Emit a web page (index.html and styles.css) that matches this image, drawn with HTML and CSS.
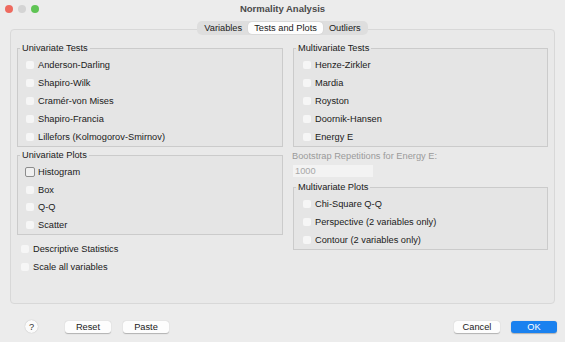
FILE: index.html
```html
<!DOCTYPE html>
<html lang="en">
<head>
  <meta charset="UTF-8">
  <title>Normality Analysis</title>
  <link rel="stylesheet" href="styles.css">
</head>
<body>

<div class="titlebar">
  <div class="lights">
    <span class="light red"></span>
    <span class="light grey"></span>
    <span class="light green"></span>
  </div>
  <div class="title">Normality Analysis</div>
  <div></div>
</div>

<div class="tabs">
  <button class="tab">Variables</button>
  <button class="tab active">Tests and Plots</button>
  <button class="tab">Outliers</button>
</div>

<!-- Tests and Plots tab -->
<div class="panel">
  <div class="column">
    <fieldset class="group">
      <legend>Univariate Tests</legend>
      <label class="row"><input type="checkbox"> Anderson-Darling</label>
      <label class="row"><input type="checkbox"> Shapiro-Wilk</label>
      <label class="row"><input type="checkbox"> Cramér-von Mises</label>
      <label class="row"><input type="checkbox"> Shapiro-Francia</label>
      <label class="row"><input type="checkbox"> Lillefors (Kolmogorov-Smirnov)</label>
    </fieldset>

    <fieldset class="group gap-top">
      <legend>Univariate Plots</legend>
      <label class="row"><input type="checkbox" class="focused"> Histogram</label>
      <label class="row"><input type="checkbox"> Box</label>
      <label class="row"><input type="checkbox"> Q-Q</label>
      <label class="row"><input type="checkbox"> Scatter</label>
    </fieldset>

    <div class="options">
      <label class="row"><input type="checkbox"> Descriptive Statistics</label>
      <label class="row"><input type="checkbox"> Scale all variables</label>
    </div>
  </div>

  <div class="column">
    <fieldset class="group">
      <legend>Multivariate Tests</legend>
      <label class="row"><input type="checkbox"> Henze-Zirkler</label>
      <label class="row"><input type="checkbox"> Mardia</label>
      <label class="row"><input type="checkbox"> Royston</label>
      <label class="row"><input type="checkbox"> Doornik-Hansen</label>
      <label class="row"><input type="checkbox"> Energy E</label>
    </fieldset>

    <div class="bootstrap">
      <div class="field-label">Bootstrap Repetitions for Energy E:</div>
      <input class="field" type="text" value="1000" disabled>
    </div>

    <fieldset class="group plots">
      <legend>Multivariate Plots</legend>
      <label class="row"><input type="checkbox"> Chi-Square Q-Q</label>
      <label class="row"><input type="checkbox"> Perspective (2 variables only)</label>
      <label class="row"><input type="checkbox"> Contour (2 variables only)</label>
    </fieldset>
  </div>
</div>

<div class="footer">
  <button class="help">?</button>
  <button class="btn reset">Reset</button>
  <button class="btn">Paste</button>
  <button class="btn push-right">Cancel</button>
  <button class="btn primary">OK</button>
</div>

</body>
</html>
```

FILE: styles.css
```css
body {
  margin: 0;
  width: 565px;
  height: 342px;
  overflow: hidden;
  background: #ececec;
  font-family: "Liberation Sans", Arial, sans-serif;
  font-size: 9.25px;
  color: #1a1a1a;
}
.titlebar {
  display: grid;
  grid-template-columns: 1fr auto 1fr;
  align-items: center;
  height: 17px;
}
.lights {
  display: flex;
  gap: 5px;
  padding-left: 5px;
}
.light {
  width: 8px;
  height: 8px;
  border-radius: 50%;
}
.light.red { background: #ee6a5f; }
.light.grey { background: #d4d4d4; }
.light.green { background: #5fc454; }
.title {
  font-weight: bold;
  font-size: 9.5px;
  color: #4a4a4a;
}

.tabs {
  position: relative;
  z-index: 1;
  display: flex;
  width: max-content;
  margin: 4px auto 0;
  padding: 1px;
  background: #dedede;
  border-radius: 5px;
}
.tab {
  font: inherit;
  height: 12px;
  line-height: 12px;
  padding: 0 6px;
  border: 0;
  background: none;
  border-radius: 4px;
  color: #1a1a1a;
}
.tab.active {
  background: #fdfdfd;
  box-shadow: 0 0 1px rgba(0,0,0,0.2);
}

.panel {
  display: grid;
  grid-template-columns: 266px 255px;
  gap: 10px;
  height: 260px;
  margin: -6px 10px 0;
  padding: 13px 6px 0;
  background: #e9e9e9;
  border: 1px solid #d8d8d8;
  border-radius: 4px;
}
.group {
  margin: 0;
  padding: 0 0 0 2px;
  border: 1px solid #cbcbcb;
  background: #e5e5e5;
}
.group legend {
  padding: 0 2px;
  line-height: 11px;
}
.group .row:first-of-type {
  margin-top: 2px;
}
.gap-top {
  margin-top: 3px;
}
.gap-top .row {
  height: 17.75px;
}
.row {
  display: flex;
  align-items: center;
  gap: 4px;
  height: 18px;
  padding-left: 6px;
}
.column:last-child .group .row {
  padding-left: 7px;
}
.row input {
  appearance: none;
  margin: 0;
  width: 8px;
  height: 8px;
  border-radius: 2px;
  background: #f6f6f6;
}
.row input.focused {
  width: 10px;
  height: 10px;
  margin-left: -1px;
  margin-right: -1px;
  border: 1px solid #8c8c8c;
  background: #f0f0f0;
}
.options {
  margin-top: 5px;
}
.options .row {
  padding-left: 4px;
}

.bootstrap {
  margin-top: 4px;
}
.field-label {
  line-height: 11px;
  color: #9a9a9a;
  margin-left: -1px;
}
.field {
  display: block;
  box-sizing: border-box;
  width: 80px;
  height: 12px;
  margin-top: 3px;
  padding: 0 2px;
  border: 0;
  font: inherit;
  color: #a8a8a8;
  background: #f3f3f3;
}
.plots {
  margin-top: 5px;
}

.footer {
  display: flex;
  align-items: center;
  height: 13px;
  margin-top: 16px;
  padding: 0 8px 0 25px;
}
.help {
  width: 13px;
  height: 13px;
  padding: 0;
  margin-right: 27px;
  border: 0;
  border-radius: 50%;
  background: #fbfbfb;
  box-shadow: 0 0 1px rgba(0,0,0,0.3);
  font: inherit;
  color: #333;
}
.btn {
  width: 46px;
  height: 12px;
  padding: 0;
  border: 0;
  border-radius: 3px;
  background: #fdfdfd;
  box-shadow: 0 0.5px 1px rgba(0,0,0,0.25);
  font: inherit;
  color: #1a1a1a;
}
.reset {
  margin-right: 12px;
}
.push-right {
  margin-left: auto;
  margin-right: 11px;
}
.primary {
  background: #1a81ef;
  color: #fff;
}
```
